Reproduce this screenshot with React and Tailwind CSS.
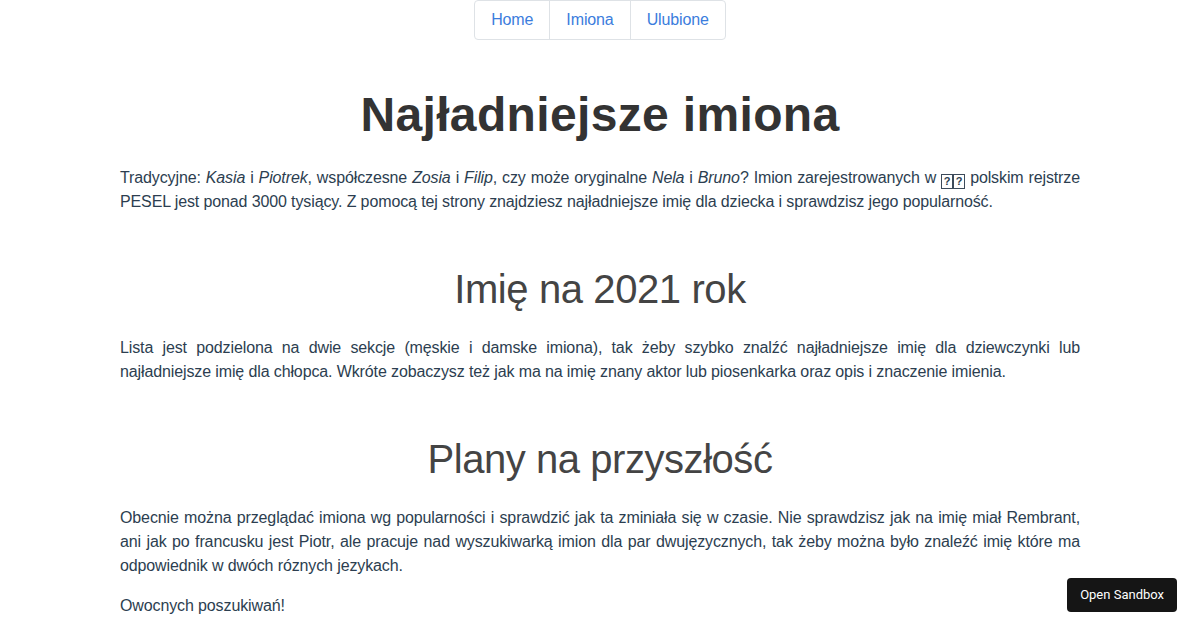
import React from 'react';

const NavLink = ({ children, last }) => (
  <a
    href="#"
    className={
      last
        ? 'px-[16px] h-[38px] flex items-center text-[#3b7ddd]'
        : 'px-[16px] h-[38px] flex items-center text-[#3b7ddd] border-r border-[#dee2e6]'
    }
  >
    {children}
  </a>
);

// brak fontu z flagą -> dwa "tofu" prostokąty jak na zrzucie
const Tofu = () => (
  <span className="inline-flex items-center justify-center w-[12px] h-[15px] border border-[#3d4b5a] text-[11px] font-bold leading-none align-[-2px] tracking-normal">
    ?
  </span>
);

export default function App() {
  return (
    <div className="min-h-screen bg-white font-['Liberation_Sans',Arial,sans-serif] text-[#2c3e50] text-[16px] leading-[24px] tracking-[-0.12px]">
      {/* Nawigacja */}
      <nav className="flex justify-center">
        <div className="flex border border-[#dee2e6] rounded-[4px]">
          <NavLink>Home</NavLink>
          <NavLink>Imiona</NavLink>
          <NavLink last>Ulubione</NavLink>
        </div>
      </nav>

      <main className="w-[960px] mx-auto text-justify">
        <h1 className="mt-[46px] mb-[22px] text-center text-[48px] leading-[58px] font-bold text-[#333333] tracking-[0.35px]">
          Najładniejsze imiona
        </h1>
        <p className="mb-4">
          Tradycyjne: <em>Kasia</em> i <em>Piotrek</em>, współczesne <em>Zosia</em> i <em>Filip</em>, czy może oryginalne{' '}
          <em>Nela</em> i <em>Bruno</em>? Imion zarejestrowanych w{' '}
          <span className="whitespace-nowrap">
            <Tofu />
            <Tofu />
          </span>{' '}
          polskim rejstrze PESEL jest ponad 3000 tysiący. Z pomocą tej strony znajdziesz najładniejsze imię dla dziecka i sprawdzisz
          jego popularność.
        </p>

        <h2 className="mt-[51px] mb-[23px] text-center text-[40px] leading-[48px] text-[#444444] tracking-[-0.4px]">
          Imię na 2021 rok
        </h2>
        <p className="mb-4">
          Lista jest podzielona na dwie sekcje (męskie i damske imiona), tak żeby szybko znalźć najładniejsze imię dla dziewczynki lub
          najładniejsze imię dla chłopca. Wkróte zobaczysz też jak ma na imię znany aktor lub piosenkarka oraz opis i znaczenie imienia.
        </p>

        <h2 className="mt-[51px] mb-[23px] text-center text-[40px] leading-[48px] text-[#444444] tracking-[-0.45px]">
          Plany na przyszłość
        </h2>
        <p className="mb-4">
          Obecnie można przeglądać imiona wg popularności i sprawdzić jak ta zminiała się w czasie. Nie sprawdzisz jak na imię miał
          Rembrant, ani jak po francusku jest Piotr, ale pracuje nad wyszukiwarką imion dla par dwujęzycznych, tak żeby można było
          znaleźć imię które ma odpowiednik w dwóch róznych jezykach.
        </p>
        <p className="mb-4">Owocnych poszukiwań!</p>
      </main>

      <button className="fixed bottom-[18px] right-[23px] h-[34px] px-[13px] rounded-[4px] bg-[#151515] text-white text-[13px] tracking-normal font-['Roboto',sans-serif]">
        Open Sandbox
      </button>
    </div>
  );
}
